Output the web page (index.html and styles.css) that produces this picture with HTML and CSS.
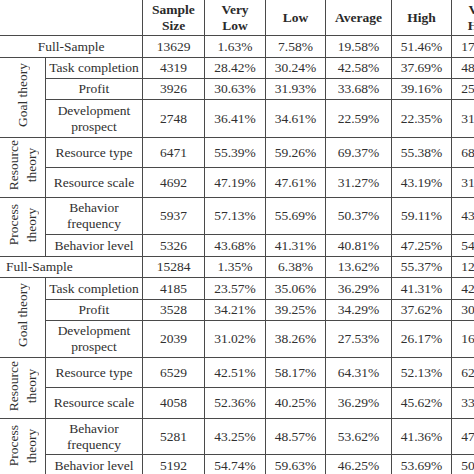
FILE: index.html
```html
<!DOCTYPE html>
<html>
<head>
<meta charset="utf-8">
<link rel="stylesheet" href="styles.css">
</head>
<body>
<div class="frame">
<table class="data">
  <colgroup>
    <col class="c-group"><col class="c-item"><col class="c-n"><col class="c-vl"><col class="c-l"><col class="c-avg"><col class="c-h"><col class="c-vh">
  </colgroup>
  <thead>
    <tr class="h-head">
      <th class="blank" colspan="2"></th>
      <th>Sample<br>Size</th>
      <th>Very<br>Low</th>
      <th>Low</th>
      <th>Average</th>
      <th>High</th>
      <th>Very<br>High</th>
    </tr>
  </thead>
  <tbody>
    <tr class="h-22"><td colspan="2">Full-Sample</td><td>13629</td><td>1.63%</td><td>7.58%</td><td>19.58%</td><td>51.46%</td><td>17.75%</td></tr>
    <tr class="h-21"><td class="grp" rowspan="3"><span>Goal theory</span></td><td>Task completion</td><td>4319</td><td>28.42%</td><td>30.24%</td><td>42.58%</td><td>37.69%</td><td>48.17%</td></tr>
    <tr class="h-21"><td>Profit</td><td>3926</td><td>30.63%</td><td>31.93%</td><td>33.68%</td><td>39.16%</td><td>25.44%</td></tr>
    <tr class="h-38"><td>Development<br>prospect</td><td>2748</td><td>36.41%</td><td>34.61%</td><td>22.59%</td><td>22.35%</td><td>31.28%</td></tr>
    <tr class="h-30"><td class="grp" rowspan="2"><span>Resource<br>theory</span></td><td>Resource type</td><td>6471</td><td>55.39%</td><td>59.26%</td><td>69.37%</td><td>55.38%</td><td>68.42%</td></tr>
    <tr class="h-30"><td>Resource scale</td><td>4692</td><td>47.19%</td><td>47.61%</td><td>31.27%</td><td>43.19%</td><td>31.56%</td></tr>
    <tr class="h-37"><td class="grp" rowspan="2"><span>Process<br>theory</span></td><td>Behavior<br>frequency</td><td>5937</td><td>57.13%</td><td>55.69%</td><td>50.37%</td><td>59.11%</td><td>43.27%</td></tr>
    <tr class="h-22"><td>Behavior level</td><td>5326</td><td>43.68%</td><td>41.31%</td><td>40.81%</td><td>47.25%</td><td>54.36%</td></tr>
    <tr class="h-21"><td class="left" colspan="2">Full-Sample</td><td>15284</td><td>1.35%</td><td>6.38%</td><td>13.62%</td><td>55.37%</td><td>12.28%</td></tr>
    <tr class="h-22"><td class="grp" rowspan="3"><span>Goal theory</span></td><td>Task completion</td><td>4185</td><td>23.57%</td><td>35.06%</td><td>36.29%</td><td>41.31%</td><td>42.16%</td></tr>
    <tr class="h-21"><td>Profit</td><td>3528</td><td>34.21%</td><td>39.25%</td><td>34.29%</td><td>37.62%</td><td>30.47%</td></tr>
    <tr class="h-37"><td>Development<br>prospect</td><td>2039</td><td>31.02%</td><td>38.26%</td><td>27.53%</td><td>26.17%</td><td>16.39%</td></tr>
    <tr class="h-30"><td class="grp" rowspan="2"><span>Resource<br>theory</span></td><td>Resource type</td><td>6529</td><td>42.51%</td><td>58.17%</td><td>64.31%</td><td>52.13%</td><td>62.48%</td></tr>
    <tr class="h-31"><td>Resource scale</td><td>4058</td><td>52.36%</td><td>40.25%</td><td>36.29%</td><td>45.62%</td><td>33.71%</td></tr>
    <tr class="h-36"><td class="grp" rowspan="2"><span>Process<br>theory</span></td><td>Behavior<br>frequency</td><td>5281</td><td>43.25%</td><td>48.57%</td><td>53.62%</td><td>41.36%</td><td>47.52%</td></tr>
    <tr class="h-22"><td>Behavior level</td><td>5192</td><td>54.74%</td><td>59.63%</td><td>46.25%</td><td>53.69%</td><td>50.14%</td></tr>
  </tbody>
</table>
</div>
</body>
</html>
```

FILE: styles.css
```css
html, body {
  margin: 0;
  padding: 0;
  background: #ffffff;
}
body {
  width: 474px;
  height: 474px;
  overflow: hidden;
}
.frame {
  margin: -1px 0 0 -1px;
}
.data {
  border-collapse: collapse;
  table-layout: fixed;
  width: 513px;
  font-family: "Liberation Serif", "Times New Roman", serif;
  font-size: 13.5px;
  line-height: 16px;
  color: #303030;
}
.data th, .data td {
  border: 1px solid #4a4a4a;
  padding: 0;
  text-align: center;
  vertical-align: middle;
  white-space: nowrap;
  overflow: hidden;
}
.data th {
  font-weight: bold;
  color: #2a2a2a;
}
.data th.blank {
  border-top-color: transparent;
  border-left-color: transparent;
}
.c-group { width: 46px; }
.c-item { width: 97px; }
.c-n { width: 62px; }
.c-vl { width: 61px; }
.c-l { width: 60px; }
.c-avg { width: 66px; }
.c-h { width: 60px; }
.c-vh { width: 61px; }

.h-head { height: 36px; }
.h-21 { height: 21px; }
.h-22 { height: 22px; }
.h-30 { height: 30px; }
.h-31 { height: 31px; }
.h-36 { height: 36px; }
.h-37 { height: 37px; }
.h-38 { height: 38px; }

.data td.left {
  text-align: left;
  padding-left: 6px;
}
.data td.grp span {
  display: inline-block;
  writing-mode: vertical-rl;
  transform: rotate(180deg);
  line-height: 18px;
  text-align: center;
}
```
